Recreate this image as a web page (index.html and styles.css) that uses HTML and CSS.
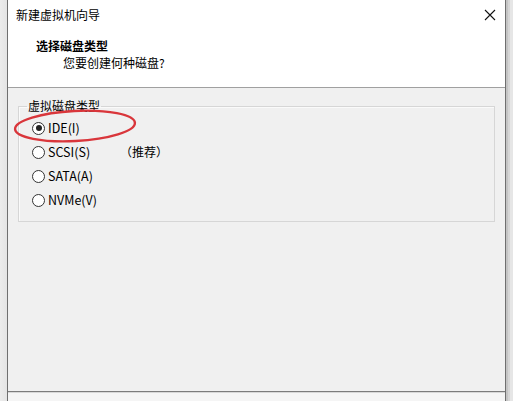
FILE: index.html
```html
<!DOCTYPE html>
<html lang="zh-CN">
<head>
<meta charset="utf-8">
<title>新建虚拟机向导</title>
<link rel="stylesheet" href="styles.css">
</head>
<body>
<div class="window">
  <div class="header">
    <div class="titlebar">
      <span class="title">新建虚拟机向导</span>
      <svg class="close" width="12" height="12" viewBox="0 0 12 12"><path d="M1 1 L11 11 M11 1 L1 11" stroke="#111" stroke-width="1.1" fill="none"/></svg>
    </div>
    <div class="heading">选择磁盘类型</div>
    <div class="subtitle">您要创建何种磁盘?</div>
  </div>
  <div class="body">
    <fieldset class="group">
      <legend>虚拟磁盘类型</legend>
      <label class="row"><span class="radio checked"></span><span class="lbl">IDE(I)</span></label>
      <label class="row"><span class="radio"></span><span class="lbl">SCSI(S)</span><span class="note">（推荐）</span></label>
      <label class="row"><span class="radio"></span><span class="lbl">SATA(A)</span></label>
      <label class="row"><span class="radio"></span><span class="lbl">NVMe(V)</span></label>
    </fieldset>
    <svg class="mark" width="130" height="40" viewBox="0 0 130 40"><ellipse cx="64" cy="19" rx="60" ry="15" transform="rotate(-3 64 19)" fill="none" stroke="#d9363b" stroke-width="2.4"/></svg>
  </div>
  <div class="footer"></div>
</div>
</body>
</html>
```
FILE: styles.css
```css
html, body {
  margin: 0;
  padding: 0;
}
body {
  width: 513px;
  height: 401px;
  overflow: hidden;
  background: linear-gradient(to right, #ececec 0, #e4e4e4 7px);
  font-family: "Noto Sans CJK SC", "Microsoft YaHei", sans-serif;
  font-size: 12px;
  color: #000;
  display: flex;
}
.window {
  margin-left: 7px;
  width: 497px;
  height: 401px;
  border-left: 1px solid #6f6f6f;
  border-right: 1px solid #6f6f6f;
  box-shadow: 2px 0 0 #c4c4c4, 4px 0 0 #d6d6d6, 7px 0 0 #e6e6e6;
  display: flex;
  flex-direction: column;
  background: #f0f0f0;
}
.header {
  background: #fff;
  border-bottom: 1px solid #a0a0a0;
  box-sizing: border-box;
  height: 88px;
}
.titlebar {
  height: 30px;
  display: flex;
  align-items: center;
  justify-content: space-between;
  padding-left: 8px;
  padding-right: 9px;
}
.title {
  line-height: 14px;
}
.close {
  display: block;
}
.heading {
  margin-top: 8px;
  padding-left: 28px;
  font-weight: bold;
  line-height: 16px;
}
.subtitle {
  margin-top: 1px;
  padding-left: 55px;
  line-height: 16px;
}
.body {
  position: relative;
  height: 304px;
  box-sizing: border-box;
  padding: 11px 10px 0 10px;
  border-bottom: 1px solid #7c7c7c;
}
.group {
  margin: 0;
  padding: 3px 0 9px 13px;
  border: 1px solid #d6d6d6;
  box-shadow: inset 1px 1px 0 #fafafa;
  min-width: 0;
}
.group legend {
  margin-left: -5px;
  padding: 0 1px;
  line-height: 14px;
}
.row {
  display: flex;
  align-items: center;
  height: 24px;
}
.radio {
  width: 13px;
  height: 13px;
  border: 1px solid #333;
  border-radius: 50%;
  box-sizing: border-box;
  display: flex;
  align-items: center;
  justify-content: center;
  background: #fff;
  margin-right: 3px;
}
.radio.checked::after {
  content: "";
  width: 6px;
  height: 6px;
  border-radius: 50%;
  background: #222;
}
.lbl {
  width: 72px;
  line-height: 14px;
  font-size: 12.5px;
}
.note {
  line-height: 14px;
}
.mark {
  position: absolute;
  left: 3px;
  top: 19px;
}
.footer {
  flex: 1;
  border-top: 1px solid #d8d8d8;
  background: #f5f5f5;
}
```
